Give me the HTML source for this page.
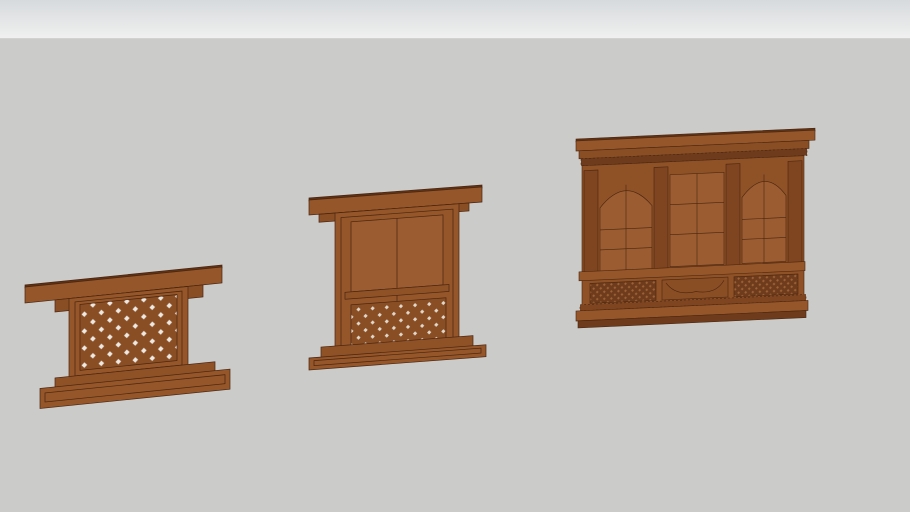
<!DOCTYPE html>
<html><head><meta charset="utf-8"><style>
html,body{margin:0;padding:0;width:910px;height:512px;overflow:hidden}
body{background:#cbcbc9}
</style></head><body>
<svg width="910" height="512" viewBox="0 0 910 512" xmlns="http://www.w3.org/2000/svg">
<defs>
<linearGradient id="sky" x1="0" y1="0" x2="0" y2="1"><stop offset="0" stop-color="#d7dadd"/><stop offset="1" stop-color="#eff0ef"/></linearGradient>
<pattern id="lat" width="12" height="12" patternUnits="userSpaceOnUse" patternTransform="rotate(45)">
<rect width="12" height="12" fill="#8a4e25"/><rect x="3.5" y="3.5" width="4" height="4" fill="#ece8e2"/></pattern>
<pattern id="lat2" width="10" height="10" patternUnits="userSpaceOnUse" patternTransform="rotate(45)">
<rect width="10" height="10" fill="#8a4e25"/><rect x="3.5" y="3.5" width="3" height="3" fill="#e0d8cc"/></pattern>
<pattern id="lat3" width="5" height="5" patternUnits="userSpaceOnUse" patternTransform="rotate(45)">
<rect width="5" height="5" fill="#6e3c1c"/><rect x="1.5" y="1.5" width="2" height="2" fill="#9c6136"/></pattern>
</defs>
<rect x="0" y="0" width="910" height="38" fill="url(#sky)"/>
<rect x="0" y="38" width="910" height="1" fill="#d2d2d0"/>

<!-- Window 1 -->
<g transform="translate(25,287) skewY(-5.8)" stroke="#4a2510" stroke-width="0.7">
<rect x="0" y="-2" width="197" height="3" fill="#5e3215"/>
<rect x="0" y="0" width="197" height="16" fill="#955629"/>
<rect x="30" y="16" width="148" height="12" fill="#8a4e25"/>
<rect x="44" y="16" width="119" height="84" fill="#955629"/>
<rect x="50" y="20" width="107" height="74" fill="none"/>
<rect x="55" y="23" width="97" height="66" fill="url(#lat)"/>
<rect x="30" y="94" width="160" height="10" fill="#8f5227"/>
<rect x="15" y="103" width="190" height="20" fill="#955629"/>
<rect x="20" y="108" width="180" height="9" fill="none"/>
</g>

<!-- Window 2 -->
<g transform="translate(309,200) skewY(-4.3)" stroke="#4a2510" stroke-width="0.7">
<rect x="0" y="-2" width="173" height="3" fill="#5e3215"/>
<rect x="0" y="0" width="173" height="15" fill="#955629"/>
<rect x="10" y="15" width="150" height="8" fill="#8a4e25"/>
<rect x="26" y="15" width="124" height="142" fill="#955629"/>
<rect x="32" y="20" width="112" height="132" fill="none"/>
<rect x="42" y="25" width="92" height="70" fill="#9a5c30"/>
<line x1="88" y1="25" x2="88" y2="108"/>
<rect x="36" y="95" width="104" height="7" fill="#8f5227"/>
<rect x="42" y="108" width="95" height="45" fill="url(#lat2)"/>
<rect x="12" y="148" width="152" height="12" fill="#8f5227"/>
<rect x="0" y="158" width="177" height="12" fill="#955629"/>
<rect x="5" y="161" width="167" height="5" fill="none"/>
</g>

<!-- Window 3 -->
<g transform="translate(576,141) skewY(-2.6)" stroke="#4a2510" stroke-width="0.6">
<rect x="0" y="-2" width="239" height="3" fill="#5e3215"/>
<rect x="0" y="0" width="239" height="10" fill="#955629"/>
<rect x="3" y="10" width="230" height="8" fill="#8a4e25"/>
<rect x="5" y="18" width="226" height="7" fill="#6e3c1c" stroke-dasharray="2 2"/>
<rect x="6" y="25" width="222" height="140" fill="#8f5227"/>
<g fill="#7e4520">
<rect x="8" y="30" width="14" height="105"/><rect x="78" y="30" width="14" height="105"/>
<rect x="150" y="30" width="14" height="105"/><rect x="212" y="30" width="14" height="105"/>
</g>
<g fill="#9a5c30">
<path d="M24 134 V68 Q50 36 76 68 V134 Z"/>
<rect x="94" y="38" width="54" height="92"/>
<path d="M166 130 V64 Q189 34 210 64 V130 Z"/>
</g>
<g fill="none">
<line x1="50" y1="46" x2="50" y2="134"/><line x1="24" y1="90" x2="76" y2="90"/><line x1="24" y1="110" x2="76" y2="110"/>
<line x1="121" y1="38" x2="121" y2="130"/><line x1="94" y1="68" x2="148" y2="68"/><line x1="94" y1="98" x2="148" y2="98"/>
<line x1="188" y1="42" x2="188" y2="130"/><line x1="166" y1="86" x2="210" y2="86"/><line x1="166" y1="106" x2="210" y2="106"/>
</g>
<rect x="3" y="131" width="226" height="9" fill="#955629"/>
<rect x="14" y="143" width="66" height="20" fill="url(#lat3)"/>
<rect x="86" y="143" width="66" height="20" fill="#8a4e25"/>
<path d="M90 146 Q100 160 120 156 Q140 160 148 146" fill="none"/>
<rect x="158" y="143" width="64" height="20" fill="url(#lat3)"/>
<rect x="4" y="164" width="226" height="6" fill="#7e4520" stroke-dasharray="2 2"/>
<rect x="0" y="170" width="232" height="10" fill="#955629"/>
<rect x="2" y="180" width="228" height="7" fill="#6e3c1c"/>
</g>
</svg>
</body></html>
